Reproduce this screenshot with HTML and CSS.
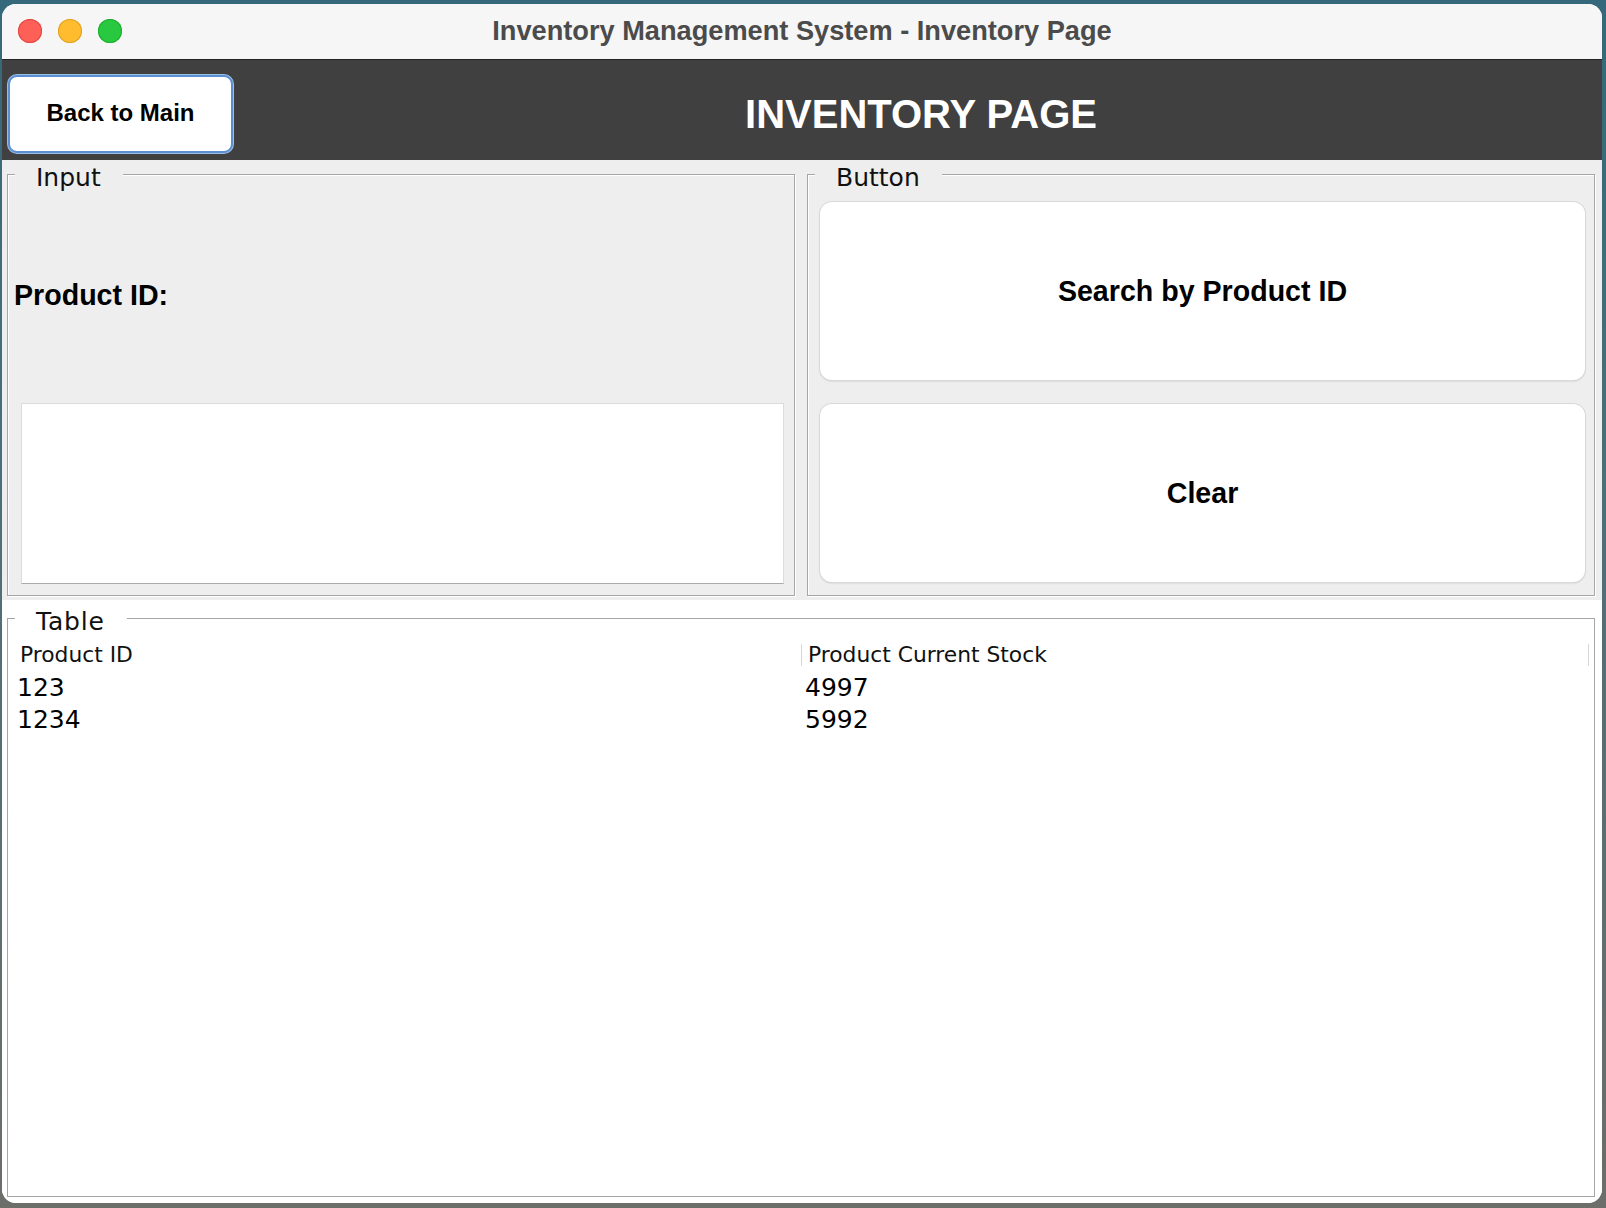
FILE: index.html
```html
<!DOCTYPE html>
<html lang="en">
<head>
<meta charset="utf-8">
<title>Inventory Management System - Inventory Page</title>
<link rel="stylesheet" href="styles.css">
</head>
<body>
<div class="window">
  <div class="titlebar">
    <div class="lights">
      <span class="light red"></span>
      <span class="light yellow"></span>
      <span class="light green"></span>
    </div>
    <div class="wtitle">Inventory Management System - Inventory Page</div>
    <div></div>
  </div>

  <div class="header">
    <button class="back-btn">Back to Main</button>
    <h1 class="page-title">INVENTORY PAGE</h1>
  </div>

  <div class="top">
    <section class="group input-group">
      <span class="legend">Input</span>
      <div class="pid-label">Product ID:</div>
      <div class="field"></div>
    </section>
    <section class="group button-group">
      <span class="legend">Button</span>
      <button class="big-btn">Search by Product ID</button>
      <button class="big-btn">Clear</button>
    </section>
  </div>

  <div class="table-area">
    <section class="group table-group">
      <span class="legend legend-white">Table</span>
      <div class="tbl">
        <div class="th th-first"><span>Product ID</span></div>
        <div class="th th-second"><span>Product Current Stock</span></div>
        <div class="td td-first">123</div>
        <div class="td td-second">4997</div>
        <div class="td td-first">1234</div>
        <div class="td td-second">5992</div>
      </div>
    </section>
  </div>
</div>
</body>
</html>
```

FILE: styles.css
```css
* {
  box-sizing: border-box;
}

html, body {
  margin: 0;
  padding: 0;
}

body {
  width: 1606px;
  height: 1208px;
  overflow: hidden;
  background: linear-gradient(180deg, #35687a 0%, #4b6f78 40%, #6c6e6a 100%);
  padding: 4px 0 0 2px;
}

.window {
  width: 1600px;
  height: 1199px;
  border-radius: 14px;
  overflow: hidden;
  background: #ffffff;
  display: flex;
  flex-direction: column;
}

/* ---------- title bar ---------- */
.titlebar {
  height: 56px;
  flex: 0 0 56px;
  background: #f6f6f6;
  border-bottom: 1px solid #242424;
  display: grid;
  grid-template-columns: 1fr auto 1fr;
  align-items: center;
}

.lights {
  display: flex;
  gap: 16px;
  padding-left: 16px;
  margin-top: -1px;
}

.light {
  width: 24px;
  height: 24px;
  border-radius: 50%;
  display: block;
}

.red {
  background: #fe5f57;
  box-shadow: inset 0 0 0 1px #e2463f;
}

.yellow {
  background: #febc2e;
  box-shadow: inset 0 0 0 1px #dfa123;
}

.green {
  background: #28c840;
  box-shadow: inset 0 0 0 1px #1dad2b;
}

.wtitle {
  font-family: "Liberation Sans", Arial, sans-serif;
  font-weight: 700;
  font-size: 27.2px;
  color: #4b4b4b;
  white-space: nowrap;
  margin-top: -1px;
}

/* ---------- dark header ---------- */
.header {
  height: 100px;
  flex: 0 0 100px;
  background: #404040;
  display: flex;
  align-items: flex-start;
  padding: 15px 0 7px 6px;
}

.back-btn {
  width: 225px;
  height: 78px;
  background: #ffffff;
  border: 2px solid #5a8fd2;
  border-radius: 9px;
  box-shadow: 0 0 0 1px #9cbde6;
  font-family: "Liberation Sans", Arial, sans-serif;
  font-weight: 700;
  font-size: 24px;
  color: #000000;
  padding: 0 0 3px 0;
  margin: 0;
}

.page-title {
  flex: 1;
  margin: 0;
  padding-left: 7px;
  align-self: center;
  text-align: center;
  font-family: "Liberation Sans", Arial, sans-serif;
  font-weight: 700;
  font-size: 40px;
  color: #ffffff;
}

/* ---------- groups (etched titled borders) ---------- */
.group {
  position: relative;
  border: 1px solid #a6a6a6;
  box-shadow: inset 1px 1px 0 #ffffff, 1px 1px 0 #ffffff;
}

.legend {
  position: absolute;
  top: -11px;
  left: 7px;
  padding: 0 22px 0 21px;
  height: 28px;
  line-height: 28px;
  background: #eeeeee;
  font-family: "DejaVu Sans", "Liberation Sans", sans-serif;
  font-size: 25px;
  color: #111111;
}

.legend-white {
  background: #ffffff;
  letter-spacing: 0.8px;
}

/* ---------- top area ---------- */
.top {
  flex: 0 0 440px;
  height: 440px;
  background: #eeeeee;
  display: grid;
  grid-template-columns: 1fr 1fr;
  column-gap: 12px;
  padding: 14px 7px 4px 5px;
}

.input-group {
  display: flex;
  flex-direction: column;
}

.pid-label {
  margin-top: 104px;
  height: 32px;
  line-height: 32px;
  padding-left: 6px;
  font-family: "Liberation Sans", Arial, sans-serif;
  font-weight: 700;
  font-size: 28.6px;
  color: #000000;
}

.field {
  margin: 92px 10px 0 13px;
  height: 181px;
  background: #ffffff;
  border: 1px solid #dcdcdc;
  border-bottom-color: #ababab;
}

.button-group {
  display: flex;
  flex-direction: column;
  gap: 24px;
  padding: 27px 9px 13px 12px;
}

.big-btn {
  flex: 1;
  background: #ffffff;
  border: none;
  border-radius: 12px;
  box-shadow: 0 0 0 1px #d9d9d9, 0 1px 2px 0 rgba(0, 0, 0, 0.22);
  font-family: "Liberation Sans", Arial, sans-serif;
  font-weight: 700;
  font-size: 28.6px;
  color: #000000;
  padding: 0;
  margin: 0;
}

/* ---------- table ---------- */
.table-area {
  flex: 1;
  background: #ffffff;
  padding: 18px 7px 6px 5px;
  display: flex;
}

.table-group {
  flex: 1;
}

.tbl {
  margin: 21px 4px 0 1px;
  display: grid;
  grid-template-columns: 792px 788px;
  grid-auto-rows: 32px;
  grid-template-rows: 31px;
  font-family: "DejaVu Sans", "Liberation Sans", sans-serif;
  color: #000000;
}

.th {
  font-size: 21.8px;
  color: #111111;
  padding-top: 4px;
}

.th span {
  display: block;
  height: 22px;
  line-height: 22px;
  white-space: nowrap;
}

.th-first span {
  padding-left: 11px;
}

.th-second span {
  border-left: 1px solid #d6d6d6;
  border-right: 1px solid #d6d6d6;
  padding-left: 6px;
}

.td {
  font-size: 25px;
  line-height: 33px;
  white-space: nowrap;
}

.td-first {
  padding-left: 8px;
}

.td-second {
  padding-left: 4px;
}
```
